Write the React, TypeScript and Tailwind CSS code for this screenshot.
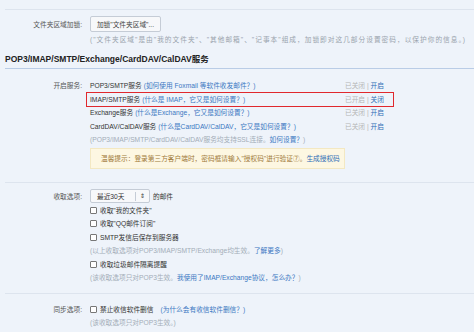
import React from 'react'

const font = { fontFamily: '"Liberation Sans", "Noto Sans CJK SC", sans-serif' }

function Label({ children }: { children: React.ReactNode }) {
  return <div className="w-[80px] shrink-0 text-right pr-[3px] text-[#555]">{children}</div>
}

function Box() {
  return <span className="inline-block w-[7px] h-[7px] border border-[#777] bg-white rounded-[1px]" />
}

function Check({ children }: { children: React.ReactNode }) {
  return (
    <div className="flex items-center gap-[3px] h-[13.5px] text-[#333]">
      <Box />
      <span>{children}</span>
    </div>
  )
}

function Service({ name, tip, open, boxed }: { name: string; tip: string; open?: boolean; boxed?: boolean }) {
  return (
    <div className={`flex items-center h-[13.5px] w-[306px] -ml-[3px] pl-[3px] ${boxed ? 'outline outline-[1.5px] outline-[#e0282d]' : ''}`}>
      <span className="text-[#333]">{name}</span>
      <span className="text-[#3b78c2] ml-[2px]">({tip})</span>
      <span className="ml-auto w-[48px] text-[#b5b5b5]">
        {open ? '已开启' : '已关闭'} | <span className="text-[#2f6db6]">{open ? '关闭' : '开启'}</span>
      </span>
    </div>
  )
}

export default function App() {
  return (
    <div className="w-[474px] h-[332px] overflow-hidden bg-[#eef3fa] text-[6.7px] leading-[13px] pl-[5px] whitespace-nowrap" style={font}>
      <div className="h-[10px] border-b border-[#dde4ee]" />
      <div className="flex pt-[6px]">
        <Label><div className="pt-[2px]">文件夹区域加锁:</div></Label>
        <div className="pl-[5px]">
          <div className="w-[71px] h-[16px] border border-[#c5ccd6] bg-[#f7f8fa] rounded-[2px] text-[#444] flex items-center justify-center">加锁"文件夹区域"...</div>
          <div className="text-[#9aa3ad] mt-[1px] tracking-[1px]">("文件夹区域"是由"我的文件夹"、"其他邮箱"、"记事本"组成，加锁即对这几部分设置密码，以保护你的信息。)</div>
        </div>
      </div>
      <div className="mt-[7px] text-[8.5px] font-bold text-[#222] pb-[2px] border-b border-[#b9cce6] leading-[13px]">POP3/IMAP/SMTP/Exchange/CardDAV/CalDAV服务</div>
      <div className="flex pt-[10px]">
        <Label>开启服务:</Label>
        <div className="pl-[5px]">
          <Service name="POP3/SMTP服务" tip="如何使用 Foxmail 等软件收发邮件？" />
          <Service name="IMAP/SMTP服务" tip="什么是 IMAP，它又是如何设置？" open boxed />
          <Service name="Exchange服务" tip="什么是Exchange，它又是如何设置？" />
          <Service name="CardDAV/CalDAV服务" tip="什么是CardDAV/CalDAV，它又是如何设置？" />
          <div className="text-[#a3adb8] h-[13.5px]">(POP3/IMAP/SMTP/CardDAV/CalDAV服务均支持SSL连接。<span className="text-[#3b78c2]">如何设置？</span>)</div>
          <div className="mt-[1px] w-[255px] h-[21px] bg-[#fdf7e2] border border-[#f3e8c2] flex items-center pl-[10px] text-[#a07a3a]">
            温馨提示：登录第三方客户端时，密码框请输入"授权码"进行验证⑦。<span className="text-[#2f6db6]">生成授权码</span>
          </div>
        </div>
      </div>
      <div className="mt-[13px] border-b border-[#dde4ee]" />
      <div className="flex pt-[6px]">
        <Label><div className="pt-[1px]">收取选项:</div></Label>
        <div className="pl-[5px]">
          <div className="flex items-center gap-[3px] h-[15px]">
            <div className="w-[60px] h-[14px] border border-[#c5ccd6] bg-[#f7f8fa] rounded-[2px] flex items-center text-[#333]">
              <span className="pl-[6px] flex-1">最近30天</span>
              <span className="border-l border-[#c5ccd6] w-[14px] h-[9px] text-center text-[6px] leading-[9px]">⇕</span>
            </div>
            <span className="text-[#333]">的邮件</span>
          </div>
          <Check>收取"我的文件夹"</Check>
          <Check>收取"QQ邮件订阅"</Check>
          <Check>SMTP发信后保存到服务器</Check>
          <div className="text-[#a3adb8] h-[13.5px]">(以上收取选项对POP3/IMAP/SMTP/Exchange均生效。<span className="text-[#3b78c2]">了解更多</span>)</div>
          <Check>收取垃圾邮件隔离提醒</Check>
          <div className="text-[#a3adb8] h-[13.5px]">(该收取选项只对POP3生效。<span className="text-[#3b78c2]">我使用了IMAP/Exchange协议，怎么办？</span>)</div>
        </div>
      </div>
      <div className="mt-[8px] border-b border-[#dde4ee]" />
      <div className="flex pt-[9px]">
        <Label>同步选项:</Label>
        <div className="pl-[5px]">
          <div className="flex items-center gap-[3px] h-[13.5px] text-[#333]">
            <Box />
            <span>禁止收信软件删信</span>
            <span className="text-[#3b78c2] ml-[4px]">(为什么会有收信软件删信？)</span>
          </div>
          <div className="text-[#a3adb8] h-[13.5px]">(该收取选项只对POP3生效。)</div>
        </div>
      </div>
    </div>
  )
}
